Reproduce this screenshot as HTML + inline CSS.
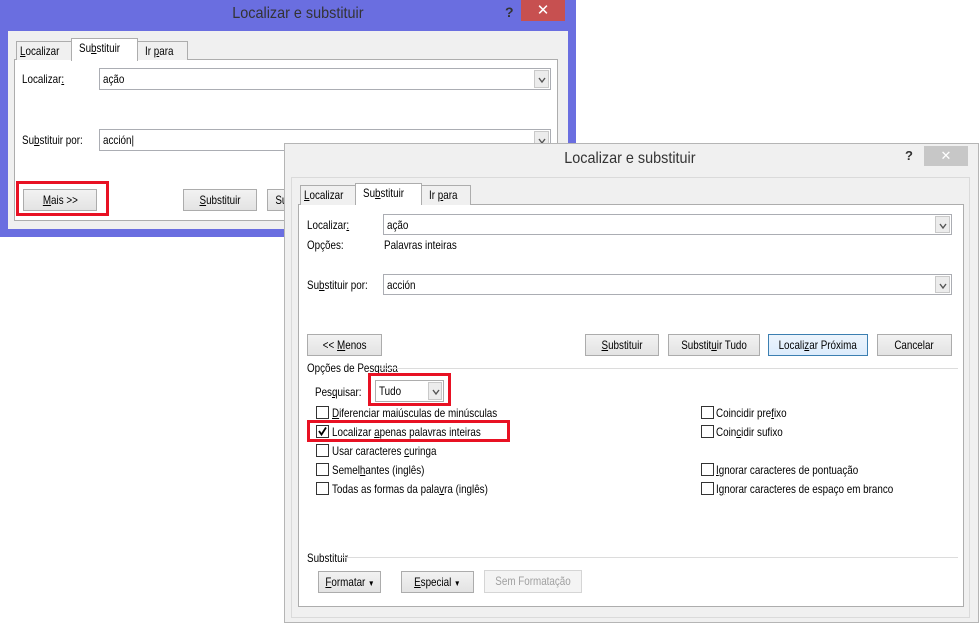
<!DOCTYPE html>
<html><head><meta charset="utf-8"><style>
*{box-sizing:border-box;margin:0;padding:0}
body{width:979px;height:623px;background:#fff;position:relative;overflow:hidden;font-family:"Liberation Sans",sans-serif;font-size:12px;color:#000}
.a{position:absolute;white-space:nowrap}
.s{display:inline-block;transform:scaleX(.82);transform-origin:left center;white-space:nowrap}
.btn .s{transform-origin:center center}
.btn{position:absolute;background:linear-gradient(#f2f2f2,#e3e3e3);border:1px solid #acacac;text-align:center;line-height:20px;font-size:12px;white-space:nowrap}
.inp{position:absolute;background:#fff;border:1px solid #abadb3}
.dd{position:absolute;right:1px;top:1px;bottom:1px;width:15px;background:#ececec;border:1px solid #c9c9c9}
.dd svg{position:absolute;left:3px;top:5px}
.tab{position:absolute;background:#f0f0f0;border:1px solid #adadad;border-bottom:none;text-align:center;line-height:18px}
.cb{position:absolute;width:13px;height:13px;border:1px solid #333;background:#fff}
.red{position:absolute;border:3px solid #e81123}
u{text-decoration:underline}
.ti{display:inline-block;transform:scaleX(.9)}
</style></head><body>
<svg width="0" height="0" style="position:absolute"><defs><symbol id="ch" viewBox="0 0 8 8"><path d="M1 2 L4 6 L7 2" fill="none" stroke="#555" stroke-width="1.4"/></symbol></defs></svg>
<!-- dialog 1 -->
<div class="a" style="left:0;top:0;width:576px;height:237px;background:#6a6ee0"></div>
<div class="a" style="left:0;top:5px;width:576px;text-align:center;font-size:16px;color:#333;padding-left:20px"><span class="ti">Localizar e substituir</span></div>
<div class="a" style="left:505px;top:4px;font-size:14px;font-weight:bold;color:#333">?</div>
<div class="a" style="left:521px;top:0;width:44px;height:21px;background:#c75050;color:#fff;text-align:center;font-size:15px;line-height:21px">✕</div>
<div class="a" style="left:8px;top:31px;width:560px;height:198px;background:#f0f0f0"></div>
<div class="a" style="left:14px;top:59px;width:544px;height:162px;background:#fff;border:1px solid #adadad"></div>
<div class="tab" style="left:16px;top:41px;width:56px;height:19px"><span class="s"><u>L</u>ocalizar</span></div>
<div class="tab" style="left:71px;top:38px;width:67px;height:23px;background:#fff"><span class="s">Su<u>b</u>stituir</span></div>
<div class="tab" style="left:137px;top:41px;width:51px;height:19px"><span class="s">Ir <u>p</u>ara</span></div>
<div class="a" style="left:22px;top:72px"><span class="s">Localizar<u>:</u></span></div>
<div class="inp" style="left:99px;top:68px;width:452px;height:22px"><span class="s" style="position:absolute;left:3px;top:3px">ação</span><div class="dd"><svg width="8" height="8"><use href="#ch"/></svg></div></div>
<div class="a" style="left:22px;top:133px"><span class="s">Su<u>b</u>stituir por:</span></div>
<div class="inp" style="left:99px;top:129px;width:452px;height:22px"><span class="s" style="position:absolute;left:3px;top:3px">acción|</span><div class="dd"><svg width="8" height="8"><use href="#ch"/></svg></div></div>
<div class="btn" style="left:23px;top:189px;width:74px;height:22px"><span class="s"><u>M</u>ais &gt;&gt;</span></div>
<div class="red" style="left:16px;top:181px;width:93px;height:35px"></div>
<div class="btn" style="left:183px;top:189px;width:74px;height:22px"><span class="s"><u>S</u>ubstituir</span></div>
<div class="btn" style="left:267px;top:189px;width:74px;height:22px;text-align:left;padding-left:6px"><span class="s">Su</span></div>

<!-- dialog 2 -->
<div class="a" style="left:284px;top:143px;width:695px;height:480px;background:#f0f0f0;border:1px solid #b5b5b5"></div>
<div class="a" style="left:285px;top:150px;width:690px;text-align:center;font-size:16px;color:#333"><span class="ti">Localizar e substituir</span></div>
<div class="a" style="left:905px;top:148px;font-size:13px;font-weight:bold;color:#333">?</div>
<div class="a" style="left:924px;top:146px;width:44px;height:20px;background:#c7c7c7;color:#fff;text-align:center;font-size:13px;line-height:20px">✕</div>
<div class="a" style="left:291px;top:177px;width:679px;height:441px;border:1px solid #dadada"></div>
<div class="a" style="left:298px;top:204px;width:666px;height:403px;background:#fff;border:1px solid #adadad"></div>
<div class="tab" style="left:300px;top:185px;width:56px;height:20px"><span class="s"><u>L</u>ocalizar</span></div>
<div class="tab" style="left:355px;top:183px;width:67px;height:22px;background:#fff"><span class="s">Su<u>b</u>stituir</span></div>
<div class="tab" style="left:421px;top:185px;width:50px;height:20px"><span class="s">Ir <u>p</u>ara</span></div>
<div class="a" style="left:307px;top:218px"><span class="s">Localizar<u>:</u></span></div>
<div class="inp" style="left:383px;top:214px;width:569px;height:21px"><span class="s" style="position:absolute;left:3px;top:3px">ação</span><div class="dd"><svg width="8" height="8"><use href="#ch"/></svg></div></div>
<div class="a" style="left:307px;top:238px"><span class="s">Opções:</span></div>
<div class="a" style="left:384px;top:238px"><span class="s">Palavras inteiras</span></div>
<div class="a" style="left:307px;top:278px"><span class="s">Su<u>b</u>stituir por:</span></div>
<div class="inp" style="left:383px;top:274px;width:569px;height:21px"><span class="s" style="position:absolute;left:3px;top:3px">acción</span><div class="dd"><svg width="8" height="8"><use href="#ch"/></svg></div></div>
<div class="btn" style="left:307px;top:334px;width:75px;height:22px"><span class="s">&lt;&lt; <u>M</u>enos</span></div>
<div class="btn" style="left:585px;top:334px;width:74px;height:22px"><span class="s"><u>S</u>ubstituir</span></div>
<div class="btn" style="left:668px;top:334px;width:92px;height:22px"><span class="s">Substit<u>u</u>ir Tudo</span></div>
<div class="btn" style="left:768px;top:334px;width:100px;height:22px;border:1px solid #3c7fb1;background:linear-gradient(#ecf4fc,#dcecfc)"><span class="s">Locali<u>z</u>ar Próxima</span></div>
<div class="btn" style="left:877px;top:334px;width:75px;height:22px"><span class="s">Cancelar</span></div>
<div class="a" style="left:307px;top:361px"><span class="s">Opções de Pesquisa</span></div>
<div class="a" style="left:380px;top:368px;width:578px;height:1px;background:#dcdcdc"></div>
<div class="a" style="left:315px;top:385px"><span class="s">Pes<u>q</u>uisar:</span></div>
<div class="inp" style="left:375px;top:380px;width:69px;height:22px;border-color:#adadad"><span class="s" style="position:absolute;left:3px;top:3px">Tudo</span><div class="dd" style="width:14px"><svg width="8" height="8"><use href="#ch"/></svg></div></div>
<div class="red" style="left:368px;top:373px;width:83px;height:33px"></div>
<div class="cb" style="left:316px;top:406px"></div><div class="a" style="left:332px;top:406px"><span class="s"><u>D</u>iferenciar maiúsculas de minúsculas</span></div>
<div class="cb" style="left:316px;top:425px"><svg width="11" height="11" style="position:absolute;left:0;top:0"><path d="M2 5 L4.5 8.5 L9 1.5" fill="none" stroke="#000" stroke-width="1.8"/></svg></div><div class="a" style="left:332px;top:425px"><span class="s">Localizar <u>a</u>penas palavras inteiras</span></div>
<div class="red" style="left:307px;top:420px;width:203px;height:22px"></div>
<div class="cb" style="left:316px;top:444px"></div><div class="a" style="left:332px;top:444px"><span class="s">Usar caracteres <u>c</u>uringa</span></div>
<div class="cb" style="left:316px;top:463px"></div><div class="a" style="left:332px;top:463px"><span class="s">Semel<u>h</u>antes (inglês)</span></div>
<div class="cb" style="left:316px;top:482px"></div><div class="a" style="left:332px;top:482px"><span class="s">Todas as formas da pala<u>v</u>ra (inglês)</span></div>
<div class="cb" style="left:701px;top:406px"></div><div class="a" style="left:716px;top:406px"><span class="s">Coincidir pre<u>f</u>ixo</span></div>
<div class="cb" style="left:701px;top:425px"></div><div class="a" style="left:716px;top:425px"><span class="s">Coin<u>c</u>idir sufixo</span></div>
<div class="cb" style="left:701px;top:463px"></div><div class="a" style="left:716px;top:463px"><span class="s"><u>I</u>gnorar caracteres de pontuação</span></div>
<div class="cb" style="left:701px;top:482px"></div><div class="a" style="left:716px;top:482px"><span class="s">I<u>g</u>norar caracteres de espaço em branco</span></div>
<div class="a" style="left:307px;top:551px"><span class="s">Substituir</span></div>
<div class="a" style="left:340px;top:557px;width:618px;height:1px;background:#dcdcdc"></div>
<div class="btn" style="left:318px;top:571px;width:63px;height:22px"><span class="s"><u>F</u>ormatar <span style="font-size:8px">▼</span></span></div>
<div class="btn" style="left:401px;top:571px;width:73px;height:22px"><span class="s"><u>E</u>special <span style="font-size:8px">▼</span></span></div>
<div class="btn" style="left:484px;top:570px;width:98px;height:23px;background:#f4f4f4;border-color:#d5d5d5;color:#a0a0a0"><span class="s">Sem Formatação</span></div>
</body></html>
